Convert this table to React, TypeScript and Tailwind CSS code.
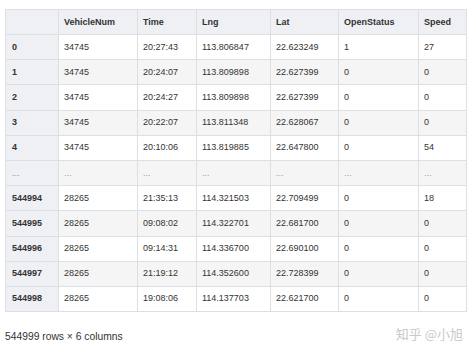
const columns = ["VehicleNum", "Time", "Lng", "Lat", "OpenStatus", "Speed"];
const widths = ["w-[53px]", "w-[79px]", "w-[59px]", "w-[74px]", "w-[68px]", "w-[80px]", "w-[48px]"];

const rows: string[][] = [
  ["0", "34745", "20:27:43", "113.806847", "22.623249", "1", "27"],
  ["1", "34745", "20:24:07", "113.809898", "22.627399", "0", "0"],
  ["2", "34745", "20:24:27", "113.809898", "22.627399", "0", "0"],
  ["3", "34745", "20:22:07", "113.811348", "22.628067", "0", "0"],
  ["4", "34745", "20:10:06", "113.819885", "22.647800", "0", "54"],
  ["...", "...", "...", "...", "...", "...", "..."],
  ["544994", "28265", "21:35:13", "114.321503", "22.709499", "0", "18"],
  ["544995", "28265", "09:08:02", "114.322701", "22.681700", "0", "0"],
  ["544996", "28265", "09:14:31", "114.336700", "22.690100", "0", "0"],
  ["544997", "28265", "21:19:12", "114.352600", "22.728399", "0", "0"],
  ["544998", "28265", "19:08:06", "114.137703", "22.621700", "0", "0"],
];

export default function App() {
  return (
    <div className="w-[474px] h-[353px] bg-white font-['Liberation_Sans',Arial,sans-serif] text-[#333] overflow-hidden">
      <div className="pt-[9px] pl-[5px]">
        <table className="border-collapse table-fixed w-[461px] text-[9px] leading-none">
          <thead>
            <tr className="h-[25px] bg-[#eef0f3]">
              <th className={`${widths[0]} border border-[#dcdfe3] text-left px-[6px] font-bold`}></th>
              {columns.map((c, i) => (
                <th key={c} className={`${widths[i + 1]} border border-[#dcdfe3] text-left pl-[5px] font-bold`}>
                  {c}
                </th>
              ))}
            </tr>
          </thead>
          <tbody>
            {rows.map((r, ri) => {
              const isEllipsis = r[0] === "...";
              return (
                <tr key={ri} className={`h-[25.2px] ${ri % 2 === 1 ? "bg-[#f5f5f5]" : "bg-white"}`}>
                  <th className={`border border-[#dcdfe3] bg-[#eef0f3] text-left pl-[6px] ${isEllipsis ? "font-normal text-[#888]" : "font-bold"}`}>
                    {r[0]}
                  </th>
                  {r.slice(1).map((v, ci) => (
                    <td key={ci} className={`border border-[#dcdfe3] pl-[5px] ${isEllipsis ? "text-[#999]" : ""}`}>
                      {v}
                    </td>
                  ))}
                </tr>
              );
            })}
          </tbody>
        </table>
        <div className="flex items-center justify-between pr-[11px] mt-[17px]">
          <span className="text-[10.3px]">544999 rows × 6 columns</span>
          <span className="text-[13px] text-[#c9c9c9] font-['Noto_Sans_CJK_SC',sans-serif] -mt-[6px]">知乎 @小旭</span>
        </div>
      </div>
    </div>
  );
}
